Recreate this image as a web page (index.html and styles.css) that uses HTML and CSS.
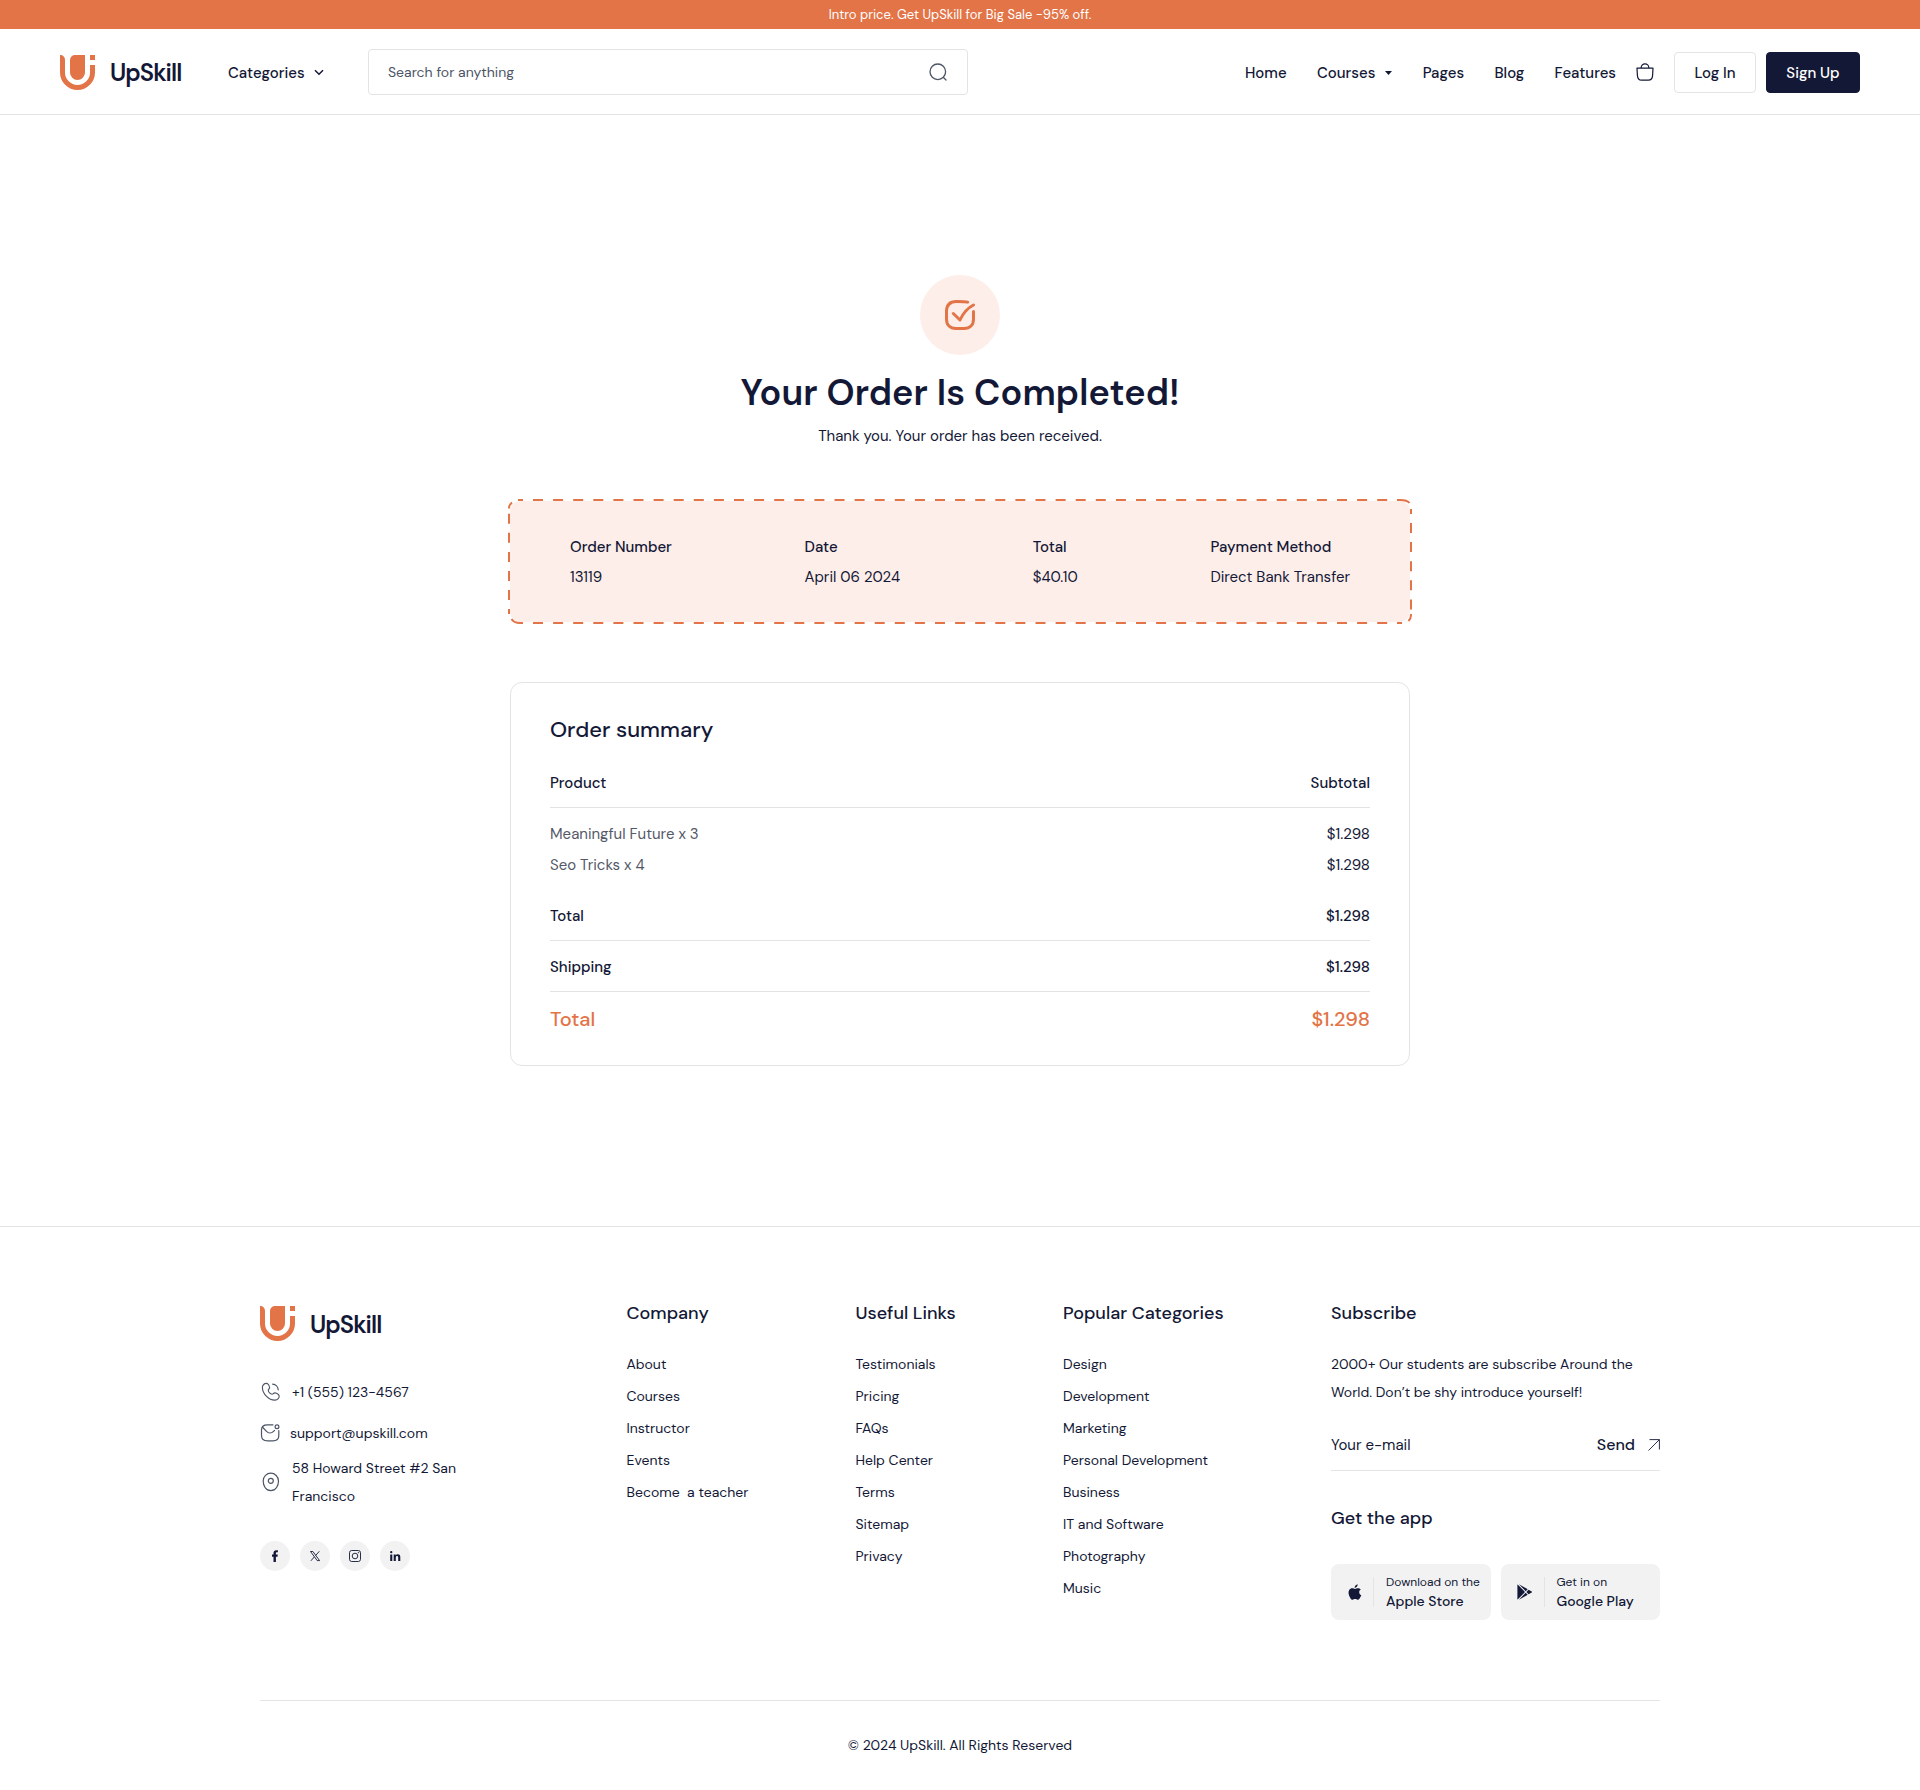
FILE: index.html
```html
<!DOCTYPE html>
<html lang="en">
<head>
  <meta charset="UTF-8">
  <title>UpSkill - Order Completed</title>
  <link rel="stylesheet" href="styles.css">
</head>
<body>
  <div class="promo-bar">Intro price. Get UpSkill for Big Sale -95% off.</div>

  <header class="header">
    <a class="logo" href="#">
      <svg class="logo-mark" viewBox="0 0 35 35">
        <path d="M0 0C3 0 5 2 5 5V17.5A12.5 12.5 0 0 0 30 17.5V10H35V17.5A17.5 17.5 0 0 1 0 17.5Z"/>
        <path d="M10 5A5 5 0 0 1 15 0H25V17.5A7.5 7.5 0 0 1 10 17.5Z"/>
        <path d="M30 0H35V5H30Z"/>
      </svg>
      <span class="logo-text">UpSkill</span>
    </a>
    <button class="categories">
      Categories
      <svg width="10" height="7" viewBox="0 0 10 7"><path d="M1 1.2L5 5.2L9 1.2" fill="none" stroke="currentColor" stroke-width="1.5"/></svg>
    </button>
    <div class="search">
      <span>Search for anything</span>
      <svg width="18" height="18" viewBox="0 0 18 18" fill="none" stroke="currentColor" stroke-width="1.3">
        <circle cx="8.8" cy="8.8" r="7.8"/>
        <path d="M14.5 14.5L17 17" stroke-linecap="round"/>
      </svg>
    </div>
    <nav class="nav">
      <a href="#">Home</a>
      <a class="nav-courses" href="#">Courses <svg width="7" height="4" viewBox="0 0 7 4"><path d="M0 0H7L3.5 4Z" fill="currentColor"/></svg></a>
      <a href="#">Pages</a>
      <a href="#">Blog</a>
      <a href="#">Features</a>
    </nav>
    <svg class="bag" width="18" height="18" viewBox="0 0 18 18" fill="none" stroke="currentColor" stroke-width="1.2">
      <path d="M1 5.2H17L16.6 12.5C16.4 15.5 14.8 17.2 12.4 17.2H5.6C3.2 17.2 1.6 15.5 1.4 12.5Z" stroke-linejoin="round"/>
      <path d="M5.2 5V4.6A3.8 3.8 0 0 1 12.8 4.6V5"/>
    </svg>
    <a class="btn btn-login" href="#">Log In</a>
    <a class="btn btn-signup" href="#">Sign Up</a>
  </header>

  <main class="main">
    <div class="check-circle">
      <svg width="32" height="32" viewBox="0 0 32 32" fill="none" stroke="currentColor" stroke-width="3" stroke-linecap="round" stroke-linejoin="round">
        <path d="M23.7 3.1C21.8 2.6 19.5 2.5 12.5 2.5C6 2.5 2.5 6 2.5 12.5V20C2.5 26 6 29.5 12 29.5H20C26 29.5 29.5 26 29.5 20V12.5"/>
        <path d="M9.3 14.5L16 21C18.5 15.5 23 9.3 29.5 6"/>
      </svg>
    </div>
    <h1 class="title">Your Order Is Completed!</h1>
    <p class="subtitle">Thank you. Your order has been received.</p>

    <section class="order-info">
      <svg class="order-border" width="904" height="125">
        <path class="dash-x" d="M25 1H880M25 124H880"/>
        <path class="dash-y" d="M1 14.7V109M903 24V111"/>
        <path d="M10 1H15M889 124H894M1 110V115M903 10V15"/>
        <path d="M4 3.5C2 5 1 7 1 9.5M889 1H892C897 1 900 2 901.5 4M15 124H12C8 124 5 122.5 3.5 120M903 115V116C903 118.5 902 120.5 900.5 122"/>
      </svg>
      <div><b>Order Number</b><span>13119</span></div>
      <div><b>Date</b><span>April 06 2024</span></div>
      <div><b>Total</b><span>$40.10</span></div>
      <div><b>Payment Method</b><span>Direct Bank Transfer</span></div>
    </section>

    <section class="summary">
      <h2>Order summary</h2>
      <div class="row"><span>Product</span><span>Subtotal</span></div>
      <div class="items">
        <div class="item"><span class="name">Meaningful Future x 3</span><span>$1.298</span></div>
        <div class="item"><span class="name">Seo Tricks x 4</span><span>$1.298</span></div>
      </div>
      <div class="row"><span>Total</span><span>$1.298</span></div>
      <div class="row row-shipping"><span>Shipping</span><span>$1.298</span></div>
      <div class="grand-total"><span>Total</span><span>$1.298</span></div>
    </section>
  </main>

  <footer class="footer">
    <div class="footer-columns">
      <div class="contact">
        <a class="logo" href="#">
          <svg class="logo-mark" viewBox="0 0 35 35">
            <path d="M0 0C3 0 5 2 5 5V17.5A12.5 12.5 0 0 0 30 17.5V10H35V17.5A17.5 17.5 0 0 1 0 17.5Z"/>
            <path d="M10 5A5 5 0 0 1 15 0H25V17.5A7.5 7.5 0 0 1 10 17.5Z"/>
            <path d="M30 0H35V5H30Z"/>
          </svg>
          <span class="logo-text">UpSkill</span>
        </a>
        <div class="contact-row">
          <svg width="20" height="20" viewBox="0 0 20 20">
            <path d="M12.7 2.2A6 6 0 0 1 18.2 7.8"/>
            <path d="M7.2 3.1L7.9 4.4C8.6 5.6 8.3 7.1 7.3 8.1C7.3 8.1 6 9.4 8.3 11.7C10.6 14 11.9 12.7 11.9 12.7C12.9 11.7 14.4 11.4 15.6 12.1L16.9 12.8C18.7 13.8 18.9 16.2 17.4 17.7C16.5 18.6 15.4 19.3 14.2 19.3C12.1 19.4 8.6 18.9 5.1 15.4C1.6 11.9 0.7 7.9 0.7 5.8C0.7 4.6 1.4 3.5 2.3 2.6C3.8 1.1 6.2 1.3 7.2 3.1Z" transform="translate(1.7 -0.2) scale(0.95)"/>
          </svg>
          <span>+1 (555) 123-4567</span>
        </div>
        <div class="contact-row contact-mail">
          <svg width="20" height="20" viewBox="0 0 20 20">
            <path d="M13 1.8H7.5C3 1.8 1.5 3.5 1.5 7V12.5C1.5 16.2 3 17.8 7.5 17.8H13C17.3 17.8 18.8 16.2 18.8 12.5V7.5"/>
            <path d="M2.8 4.5L6.5 8.3C8.5 10.3 11.5 10.3 13.5 8.3L14.5 7.3"/>
            <circle cx="17" cy="3.7" r="1.9"/>
          </svg>
          <span>support@upskill.com</span>
        </div>
        <div class="contact-row">
          <svg width="20" height="20" viewBox="0 0 20 20">
            <path d="M3.2 9C3.2 4.6 6.7 1.2 10.8 1.2S18.5 4.6 18.5 9C18.5 13.3 16 18.7 10.8 18.7S3.2 13.3 3.2 9Z"/>
            <circle cx="10.8" cy="8.8" r="2.5"/>
          </svg>
          <span>58 Howard Street #2 San Francisco</span>
        </div>
        <div class="socials">
          <a href="#"><svg width="14" height="14" viewBox="0 0 14 14"><path d="M5.5 13V7.7H4V5.5H5.5V4.1C5.5 2.2 6.5 1.2 8.4 1.2C9 1.2 9.6 1.3 9.9 1.3V3.2H9C8.2 3.2 7.9 3.6 7.9 4.2V5.5H9.8L9.5 7.7H7.9V13Z" fill="currentColor"/></svg></a>
          <a href="#"><svg width="12" height="12" viewBox="0 0 12 12" fill="none" stroke="currentColor" stroke-width="0.9"><path d="M1.5 1.5H3.9L10.6 10.6H8.2ZM10.3 1.3L6.6 5.5M5.3 6.9L1.9 10.8"/></svg></a>
          <a href="#"><svg width="14" height="14" viewBox="0 0 14 14" fill="none" stroke="currentColor" stroke-width="0.9"><rect x="1.5" y="1.5" width="11" height="11" rx="2.2"/><circle cx="7" cy="7" r="2.8"/><circle cx="10.4" cy="3.7" r="0.3"/></svg></a>
          <a href="#"><svg width="14" height="14" viewBox="0 0 14 14"><path d="M2.2 5.5H4.3V12H2.2ZM2.1 3.2A1.15 1.15 0 1 1 4.4 3.2A1.15 1.15 0 1 1 2.1 3.2ZM5.7 5.5H7.7V6.4C8.1 5.7 8.8 5.3 9.8 5.3C11.7 5.3 12.3 6.5 12.3 8.2V12H10.2V8.7C10.2 7.8 10 7.1 9.1 7.1C8.2 7.1 7.8 7.8 7.8 8.7V12H5.7Z" fill="currentColor"/></svg></a>
        </div>
      </div>

      <div>
        <h3>Company</h3>
        <ul>
          <li>About</li>
          <li>Courses</li>
          <li>Instructor</li>
          <li>Events</li>
          <li>Become&nbsp; a teacher</li>
        </ul>
      </div>

      <div>
        <h3>Useful Links</h3>
        <ul>
          <li>Testimonials</li>
          <li>Pricing</li>
          <li>FAQs</li>
          <li>Help Center</li>
          <li>Terms</li>
          <li>Sitemap</li>
          <li>Privacy</li>
        </ul>
      </div>

      <div>
        <h3>Popular Categories</h3>
        <ul>
          <li>Design</li>
          <li>Development</li>
          <li>Marketing</li>
          <li>Personal Development</li>
          <li>Business</li>
          <li>IT and Software</li>
          <li>Photography</li>
          <li>Music</li>
        </ul>
      </div>

      <div>
        <h3>Subscribe</h3>
        <p class="subscribe-text">2000+ Our students are subscribe Around the<br>World. Don’t be shy introduce yourself!</p>
        <div class="subscribe-form">
          <span>Your e-mail</span>
          <button class="send">Send <svg width="12" height="12" viewBox="0 0 12 12" fill="none" stroke="currentColor" stroke-width="0.9"><path d="M0.5 11.5L11.3 0.7M1.5 0.6H11.4V10.5"/></svg></button>
        </div>
        <h3 class="app-title">Get the app</h3>
        <div class="apps">
          <a class="app" href="#">
            <svg width="14" height="16" viewBox="0 0 14 16"><path d="M9.6 0.2C9.7 1.2 9.3 2.1 8.8 2.8C8.2 3.5 7.4 3.9 6.7 3.9C6.6 3 7 2.1 7.5 1.5C8.1 0.8 9 0.3 9.6 0.2ZM12.8 5.5C11.8 6.1 11.2 7 11.2 8.2C11.2 9.6 12 10.7 13.3 11.2C13 12.1 12.5 13 11.9 13.9C11.3 14.8 10.6 15.7 9.6 15.7C8.6 15.7 8.3 15.1 7.1 15.1C5.9 15.1 5.5 15.7 4.6 15.7C3.6 15.8 2.9 14.8 2.3 13.9C0.4 11.2 0 8 1.2 6.1C1.9 4.9 3.1 4.3 4.2 4.3C5.4 4.3 6.1 4.9 7.1 4.9C8 4.9 8.6 4.3 9.9 4.3C11 4.3 12.1 4.7 12.8 5.5Z" fill="currentColor"/></svg>
            <div><small>Download on the</small><b>Apple Store</b></div>
          </a>
          <a class="app" href="#">
            <svg width="16" height="16" viewBox="0 0 16 16" fill="currentColor"><path d="M0.7 0.6L8 8L0.7 15.4C0.5 15.2 0.4 15 0.4 14.7V1.3C0.4 1 0.5 0.8 0.7 0.6ZM1.9 0.2L10.7 5.2L8.7 7.2ZM8.7 8.8L10.7 10.8L1.9 15.8ZM11.6 5.8L14.7 7.5C15.1 7.8 15.1 8.2 14.7 8.5L11.6 10.2L9.4 8Z"/></svg>
            <div><small>Get in on</small><b>Google Play</b></div>
          </a>
        </div>
      </div>
    </div>

    <div class="copyright">© 2024 UpSkill. All Rights Reserved</div>
  </footer>
</body>
</html>
```
FILE: styles.css
```css
* {
  box-sizing: border-box;
}

body {
  margin: 0;
  font-family: "DM Sans", Inter, sans-serif;
  font-size: 15px;
  color: #131836;
  background-color: #fff;
}

h1, h2, h3, p, ul {
  margin: 0;
  padding: 0;
}

a {
  color: inherit;
  text-decoration: none;
}

button {
  padding: 0;
  border: none;
  background: none;
  font: inherit;
  color: inherit;
}

svg {
  display: block;
  flex-shrink: 0;
}

.promo-bar {
  height: 29px;
  line-height: 30px;
  background-color: #e27447;
  color: #fff;
  font-size: 13px;
  text-align: center;
}

/* Header */
.header {
  display: flex;
  align-items: center;
  height: 86px;
  padding: 1px 60px 0;
  border-bottom: 1px solid #e4e4e4;
  font-weight: 500;
}

.logo {
  display: flex;
  align-items: center;
  gap: 15px;
}

.logo-mark {
  width: 35px;
  height: 35px;
  fill: #e27447;
}

.logo-text {
  width: 72px;
  padding-top: 2px;
  font-size: 24px;
  font-weight: 600;
  letter-spacing: -0.95px;
  line-height: 30px;
  white-space: nowrap;
}

.categories {
  display: flex;
  align-items: center;
  justify-content: space-between;
  width: 96px;
  margin-left: 46px;
  padding-top: 1px;
  font-weight: 500;
}

.search {
  display: flex;
  align-items: center;
  justify-content: space-between;
  width: 600px;
  height: 46px;
  margin-left: 44px;
  padding: 0 20px 0 19px;
  border: 1px solid #e4e4e4;
  border-radius: 4px;
  color: #4d5566;
  font-size: 14px;
  font-weight: 400;
}

.nav {
  display: flex;
  justify-content: space-between;
  width: 371px;
  margin-left: auto;
  padding-top: 1px;
}

.nav-courses {
  display: flex;
  align-items: center;
  gap: 10px;
}

.bag {
  margin: 0 20px;
}

.btn {
  height: 41px;
  line-height: 40px;
  border: 1px solid #e4e4e4;
  border-radius: 4px;
  text-align: center;
}

.btn-login {
  width: 82px;
}

.btn-signup {
  width: 94px;
  margin-left: 10px;
  border-color: #131836;
  background-color: #131836;
  color: #fff;
}

/* Order */
.main {
  width: 900px;
  margin: 0 auto;
  padding: 160px 0;
}

.check-circle {
  display: flex;
  align-items: center;
  justify-content: center;
  width: 80px;
  height: 80px;
  margin: 0 auto 15px;
  border-radius: 50%;
  background-color: #feeeea;
  color: #e27447;
}

.title {
  font-size: 36px;
  font-weight: 600;
  letter-spacing: 0.1px;
  line-height: 46px;
  text-align: center;
}

.subtitle {
  margin-top: 6px;
  line-height: 28px;
  text-align: center;
}

.order-info {
  position: relative;
  display: flex;
  justify-content: space-between;
  height: 121px;
  margin-top: 51px;
  padding: 31px 60px;
  border-radius: 10px;
  background-color: #feeeea;
}

.order-border {
  position: absolute;
  top: -2px;
  left: -2px;
  fill: none;
  stroke: #e27447;
  stroke-width: 2;
}

.dash-x {
  stroke-dasharray: 10 10.1;
}

.dash-y {
  stroke-dasharray: 10 9.1;
}

.order-info b,
.order-info span {
  display: block;
  line-height: 30px;
}

.order-info b {
  font-weight: 500;
}

.summary {
  margin-top: 60px;
  padding: 32px 39px 31px;
  border: 1px solid #e4e4e4;
  border-radius: 12px;
}

.summary h2 {
  margin-bottom: 24px;
  font-size: 22px;
  font-weight: 500;
  line-height: 30px;
}

.row,
.item,
.grand-total {
  display: flex;
  justify-content: space-between;
}

.row {
  padding-bottom: 10px;
  border-bottom: 1px solid #e4e4e4;
  font-weight: 500;
  line-height: 28px;
}

.items {
  padding: 11px 0 21px;
}

.item {
  line-height: 31px;
}

.name {
  color: #545968;
}

.row-shipping {
  padding-top: 12px;
}

.grand-total {
  padding-top: 12px;
  color: #e27447;
  font-size: 20px;
  font-weight: 500;
  line-height: 30px;
}

/* Footer */
.footer {
  padding: 74px 260px 0;
  border-top: 1px solid #e4e4e4;
  font-size: 14px;
}

.footer-columns {
  display: grid;
  grid-template-columns: 366.5px 229px 207.5px 268px 329px;
  padding-bottom: 80px;
}

.footer h3 {
  font-size: 18px;
  font-weight: 500;
  line-height: 24px;
}

.footer ul {
  margin-top: 23px;
  list-style: none;
}

.footer li {
  line-height: 32px;
}

.contact .logo {
  margin: 5px 0 37px;
}

.contact-row {
  display: flex;
  align-items: center;
  gap: 12px;
  width: 220px;
  line-height: 28px;
}

.contact-row svg {
  fill: none;
  stroke: #4d5566;
  stroke-width: 1.2;
  stroke-linecap: round;
}

.contact-mail {
  gap: 10px;
  margin: 13px 0 7px;
}

.socials {
  display: flex;
  gap: 10px;
  margin-top: 31px;
}

.socials a {
  display: flex;
  align-items: center;
  justify-content: center;
  width: 30px;
  height: 30px;
  border-radius: 50%;
  background-color: #f2f2f2;
}

.subscribe-text {
  margin-top: 25px;
  line-height: 28px;
  white-space: nowrap;
}

.subscribe-form {
  display: flex;
  justify-content: space-between;
  height: 40px;
  margin-top: 25px;
  border-bottom: 1px solid #e4e4e4;
  font-size: 15px;
  line-height: 28px;
}

.send {
  display: flex;
  align-items: center;
  gap: 13px;
  height: 28px;
  font-size: 16px;
  font-weight: 500;
}

.footer .app-title {
  margin: 35px 0 34px;
}

.apps {
  display: flex;
  gap: 10px;
}

.app {
  display: flex;
  flex: 1;
  align-items: center;
  height: 56px;
  padding-left: 16px;
  border-radius: 8px;
  background-color: #f2f2f2;
}

.app svg {
  width: 16px;
}

.app div {
  display: flex;
  flex-direction: column;
  justify-content: center;
  height: 30px;
  margin-left: 10px;
  padding-left: 12px;
  border-left: 1px solid #e4e4e4;
  white-space: nowrap;
}

.app:last-child div {
  margin-left: 11px;
}

.app small {
  font-size: 12px;
  line-height: 18px;
}

.app b {
  font-size: 14px;
  font-weight: 500;
  line-height: 20px;
}

.copyright {
  padding-top: 30px;
  border-top: 1px solid #e4e4e4;
  line-height: 28px;
  text-align: center;
}
```
